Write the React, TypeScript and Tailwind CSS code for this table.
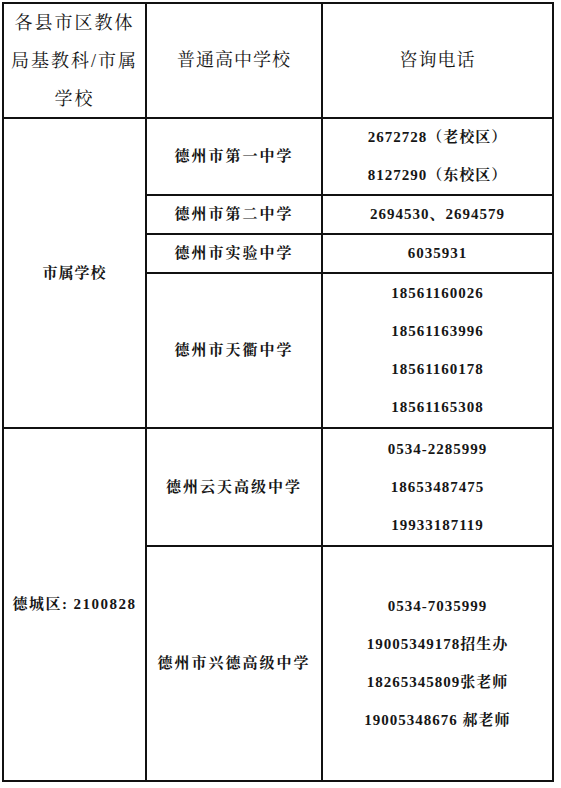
const FONT = "font-['Liberation_Serif','Noto_Serif_CJK_SC','Noto_Sans_CJK_SC',serif]"

function Cell({ className = "", children }: { className?: string; children?: React.ReactNode }) {
  return <div className={`flex flex-col items-center justify-center bg-white text-center ${className}`}>{children}</div>
}

function Lines({ items }: { items: string[] }) {
  return (
    <div className="flex flex-col gap-[17px] text-[15px] leading-[21px] font-bold tracking-[1px]">
      {items.map((t) => (
        <span key={t}>{t}</span>
      ))}
    </div>
  )
}

export default function App() {
  return (
    <div className={`min-h-[788px] w-[561px] bg-white pl-[2px] pt-[2px] text-[#161616] ${FONT}`}>
      <div className="grid w-[552px] grid-cols-[141px_174px_229px] grid-rows-[113px_75px_37px_37px_153px_116px_233px] gap-[2px] bg-[#111] p-[2px]">
        {/* header */}
        <Cell className="text-[18px] leading-[38px] tracking-[2px]">
          <span>各县市区教体</span>
          <span>局基教科/市属</span>
          <span>学校</span>
        </Cell>
        <Cell className="text-[18px] tracking-[1px]">普通高中学校</Cell>
        <Cell className="text-[18px] tracking-[1px]">咨询电话</Cell>

        {/* 市属学校 */}
        <Cell className="row-span-4 text-[15px] font-bold tracking-[1px]">市属学校</Cell>
        <Cell className="text-[15px] font-bold tracking-[2px]">德州市第一中学</Cell>
        <Cell>
          <Lines items={["2672728（老校区）", "8127290（东校区）"]} />
        </Cell>
        <Cell className="text-[15px] font-bold tracking-[2px]">德州市第二中学</Cell>
        <Cell>
          <Lines items={["2694530、2694579"]} />
        </Cell>
        <Cell className="text-[15px] font-bold tracking-[2px]">德州市实验中学</Cell>
        <Cell>
          <Lines items={["6035931"]} />
        </Cell>
        <Cell className="text-[15px] font-bold tracking-[2px]">德州市天衢中学</Cell>
        <Cell>
          <Lines items={["18561160026", "18561163996", "18561160178", "18561165308"]} />
        </Cell>

        {/* 德城区 */}
        <Cell className="row-span-2 text-[15px] font-bold tracking-[1.5px]">德城区: 2100828</Cell>
        <Cell className="text-[15px] font-bold tracking-[2px]">德州云天高级中学</Cell>
        <Cell>
          <Lines items={["0534-2285999", "18653487475", "19933187119"]} />
        </Cell>
        <Cell className="text-[15px] font-bold tracking-[2px]">德州市兴德高级中学</Cell>
        <Cell>
          <Lines items={["0534-7035999", "19005349178招生办", "18265345809张老师", "19005348676 郝老师"]} />
        </Cell>
      </div>
    </div>
  )
}
